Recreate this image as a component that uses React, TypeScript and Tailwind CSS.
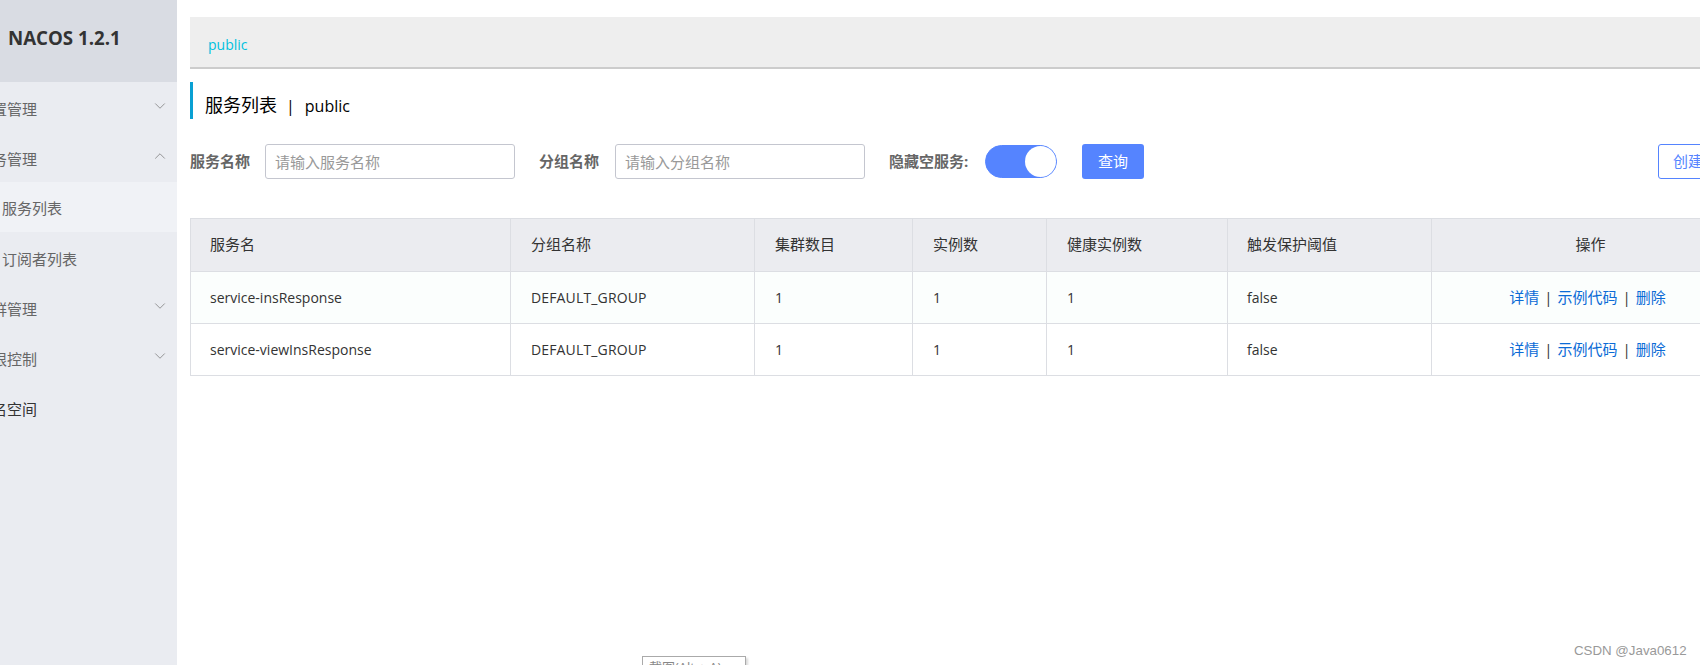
import { ChevronDown, ChevronUp } from "lucide-react";

const FONT = "font-['Open_Sans','Noto_Sans_CJK_SC',sans-serif]";

const rows = ["service-insResponse", "service-viewInsResponse"];

function NavItem({ label, open, plain }: { label: string; open?: boolean; plain?: boolean }) {
    return (
        <div className={`flex h-[50px] items-center justify-between pr-[8px] ${plain ? "text-[#333]" : "text-[#666]"}`}>
            <span className="ml-[-23px] mt-[5px] text-[15px] leading-none">{label}</span>
            {!plain && (open
                ? <ChevronUp className="mb-[2px] h-[18px] w-[18px] text-[#777]" strokeWidth={1} />
                : <ChevronDown className="mb-[2px] h-[18px] w-[18px] text-[#777]" strokeWidth={1} />)}
        </div>
    );
}

function SubItem({ label, active }: { label: string; active?: boolean }) {
    return (
        <div className={`flex h-[50px] items-center pl-[2px] text-[15px] text-[#666] ${active ? "bg-[#f0f2f6]" : ""}`}>
            <span className={`${active ? "mt-[3px]" : "mt-[5px]"} leading-none`}>{label}</span>
        </div>
    );
}

export default function App() {
    return (
        <div className={`relative flex h-[665px] w-[1700px] overflow-hidden bg-white ${FONT}`}>
            {/* Sidebar, cut off at the left of the shot */}
            <aside className="h-full w-[177px] shrink-0 overflow-hidden bg-[#eaecf1]">
                <div className="flex h-[82px] items-center bg-[#d9dce3] pb-[6px] pl-[8px] text-[18.7px] font-bold text-[#333]">
                    NACOS 1.2.1
                </div>
                <NavItem label="配置管理" />
                <NavItem label="服务管理" open />
                <SubItem label="服务列表" active />
                <SubItem label="订阅者列表" />
                <NavItem label="集群管理" />
                <NavItem label="权限控制" />
                <NavItem label="命名空间" plain />
            </aside>

            <main className="min-w-0 flex-1 overflow-hidden pl-[13px] pt-[17px]">
                <div className="flex h-[52px] w-[1600px] items-center border-b-2 border-[#ccc] bg-[#eee] pl-[18px] pt-[5px] text-[14px] text-[#00c1de]">
                    public
                </div>

                <div className="mt-[13px] flex h-[37px] items-center border-l-[3px] border-[#09a0d3] pl-[12px] pt-[10px] text-[18px] text-black">
                    服务列表<span className="ml-[9px] mr-[10px] text-[16px]">|</span><span className="text-[16px]">public</span>
                </div>

                <div className="mt-[25px] flex h-[35px] w-[1600px] items-center">
                    <span className="mr-[15px] w-[60px] shrink-0 text-[15px] font-bold text-[#666]">服务名称</span>
                    <input className="mr-[24px] h-[35px] w-[250px] shrink-0 rounded-[3px] border border-[#c4c6cf] px-[9px] text-[15px] outline-none placeholder:text-[#999]" placeholder="请输入服务名称" />
                    <span className="mr-[16px] w-[60px] shrink-0 text-[15px] font-bold text-[#666]">分组名称</span>
                    <input className="mr-[24px] h-[35px] w-[250px] shrink-0 rounded-[3px] border border-[#c4c6cf] px-[9px] text-[15px] outline-none placeholder:text-[#999]" placeholder="请输入分组名称" />
                    <span className="mr-[15px] w-[81px] shrink-0 whitespace-nowrap text-[15px] font-bold text-[#666]">隐藏空服务:</span>
                    <div className="mr-[25px] flex h-[33px] w-[72px] shrink-0 items-center justify-end rounded-full border border-[#5584ff] bg-[#5584ff]">
                        <div className="h-[31px] w-[31px] rounded-full bg-white" />
                    </div>
                    <button className="h-[35px] w-[62px] shrink-0 rounded-[3px] bg-[#5584ff] text-[15px] text-white">查询</button>
                    <button className="ml-[514px] h-[35px] w-[90px] shrink-0 rounded-[3px] border border-[#5584ff] text-[15px] text-[#5584ff]">创建服务</button>
                </div>

                <table className="mt-[39px] w-[1559px] table-fixed border-collapse text-[14px] text-[#333]">
                    <thead>
                        <tr className="h-[53px] bg-[#ebecf0] text-left text-[15px]">
                            <th className="w-[320px] border border-[#dcdee3] pb-[1px] pl-[19px] pr-[20px] font-normal">服务名</th>
                            <th className="w-[244px] border border-[#dcdee3] pb-[1px] px-[20px] font-normal">分组名称</th>
                            <th className="w-[158px] border border-[#dcdee3] pb-[1px] px-[20px] font-normal">集群数目</th>
                            <th className="w-[134px] border border-[#dcdee3] pb-[1px] px-[20px] font-normal">实例数</th>
                            <th className="w-[181px] border border-[#dcdee3] pb-[1px] px-[20px] font-normal">健康实例数</th>
                            <th className="w-[204px] border border-[#dcdee3] pb-[1px] pl-[19px] pr-[20px] font-normal">触发保护阈值</th>
                            <th className="w-[318px] border border-[#dcdee3] pb-[1px] px-[20px] text-center font-normal">操作</th>
                        </tr>
                    </thead>
                    <tbody>
                        {rows.map((name, i) => (
                            <tr key={name} className={`h-[52px] ${i === 0 ? "bg-[#fbfefd]" : "bg-white"}`}>
                                <td className="border border-[#dcdee3] pl-[19px] pr-[20px]">{name}</td>
                                <td className="border border-[#dcdee3] px-[20px] tracking-[0.15px]">DEFAULT_GROUP</td>
                                <td className="border border-[#dcdee3] px-[20px]">1</td>
                                <td className="border border-[#dcdee3] px-[20px]">1</td>
                                <td className="border border-[#dcdee3] px-[20px]">1</td>
                                <td className="border border-[#dcdee3] pl-[19px] pr-[20px]">false</td>
                                <td className="border border-[#dcdee3] px-[20px] text-center text-[15px] text-[#0b6bd6]">
                                    <span className="mr-[6px] whitespace-nowrap">详情<span className="mx-[5px] text-[#333]">|</span>示例代码<span className="mx-[5px] text-[#333]">|</span>删除</span>
                                </td>
                            </tr>
                        ))}
                    </tbody>
                </table>
            </main>

            {/* Screenshot tool tooltip, cut by the bottom edge */}
            <div className="absolute left-[642px] top-[656px] h-[24px] w-[104px] border border-[#aaa] bg-white pl-[6px] text-[13px] leading-[20px] text-[#888] shadow-[2px_2px_2px_rgba(0,0,0,0.15)]">
                截图(Alt + A)
            </div>
            {/* Watermark */}
            <div className="absolute left-[1574px] top-[643px] font-['Liberation_Sans',sans-serif] text-[13.3px] leading-[16px] text-[#999]">
                CSDN @Java0612
            </div>
        </div>
    );
}
